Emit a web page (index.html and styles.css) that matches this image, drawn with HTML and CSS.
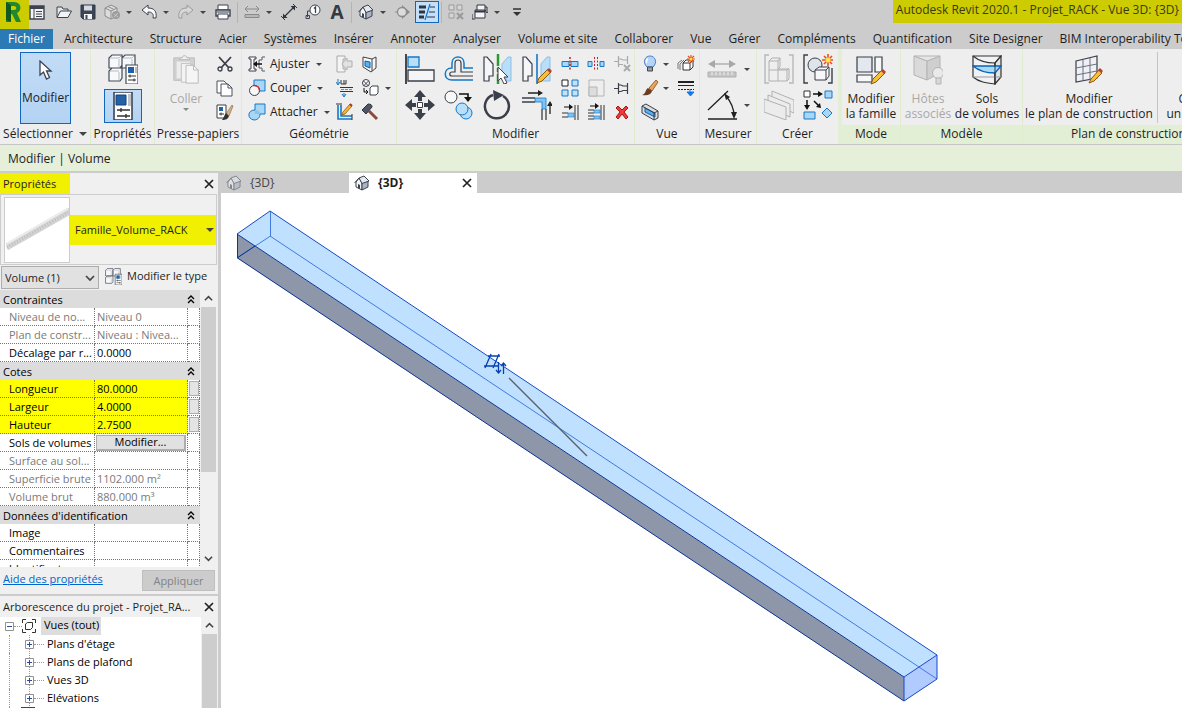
FILE: index.html
```html
<!DOCTYPE html>
<html lang="fr">
<head>
  <meta charset="utf-8">
  <meta name="viewport" content="width=device-width, initial-scale=1">
  <title>Autodesk Revit 2020.1 - Projet_RACK - Vue 3D: {3D}</title>
  <link rel="stylesheet" href="styles.css">
</head>
<body>

  <!-- Icons -->
  <svg class="sprite" aria-hidden="true">
    <symbol id="i-window" viewBox="0 0 16 16"><path d="M1 2h14v13H1z" fill="#f4f4f4" stroke="#3c4350" stroke-width="1.4"/><path d="M1 2h14v3H1z" fill="#3c4350"/><path d="M5 5v10" stroke="#3c4350"/><path d="M7 7.5h6M7 10h6M7 12.5h6" stroke="#3c4350"/></symbol>
    <symbol id="i-open" viewBox="0 0 16 16"><path d="M1 13V3h5l1 2h5v2" fill="#e4e6ea" stroke="#3c4350"/><path d="M1 13.5L4.5 7h11L12 13.5z" fill="#f2f3f5" stroke="#3c4350"/></symbol>
    <symbol id="i-save" viewBox="0 0 16 16"><path d="M1 1h14v14H3l-2-2z" fill="#3c4658" stroke="#2f3846"/><path d="M4 1.5h8v5H4z" fill="#d8dbe0"/><path d="M4 10h8v5H4z" fill="#f5f5f5"/><path d="M5.5 11h2v4h-2z" fill="#3c4658"/></symbol>
    <symbol id="i-sync" viewBox="0 0 16 16"><path d="M1 4l6-3 6 3v8l-6 3-6-3z" fill="#dcdcdc" stroke="#8c8c8c"/><path d="M1 4l6 3 6-3M7 7v8M4 2.500l6 3" fill="none" stroke="#8c8c8c"/><circle cx="12" cy="11" r="4" fill="#9c9c9c"/><path d="M10 13l4-4M10 10l4 3" stroke="#c8c8c8"/></symbol>
    <symbol id="i-undo" viewBox="0 0 16 16"><path d="M1 6l6-5v3c6 0 9 3 8 10h-3c1-4-1-6-5-6v3z" fill="#f8f8f8" stroke="#3c4350" stroke-linejoin="round"/></symbol>
    <symbol id="i-redo" viewBox="0 0 16 16"><path d="M15 6L9 1v3C3 4 0 7 1 14h3C3 10 5 8 9 8v3z" fill="#d8d8d8" stroke="#9a9a9a" stroke-linejoin="round"/></symbol>
    <symbol id="i-print" viewBox="0 0 16 16"><path d="M3 1h10v5H3z" fill="#fff" stroke="#3c4350"/><path d="M1 6h14v6H1z" fill="#eceef0" stroke="#3c4350" stroke-width="1.400"/><path d="M3 10h10v5H3z" fill="#fff" stroke="#3c4350"/><path d="M2 8h12" stroke="#3c4350"/></symbol>
    <symbol id="i-measure" viewBox="0 0 16 16"><path d="M1 5h14M4 2L1 5l3 3M12 2l3 3-3 3" fill="none" stroke="#8a8a8a"/><path d="M1 10.5h14v3H1z" fill="#b8b8b8" stroke="#8a8a8a"/></symbol>
    <symbol id="i-dim" viewBox="0 0 16 16"><path d="M3 13L13 3" stroke="#2f3540" stroke-width="1.300"/><path d="M2 14V9.500l4.500 4.500zM14 2v4.500L9.500 2z" fill="#2f3540"/><path d="M0 12l4 4M12 0l4 4" stroke="#2f3540"/></symbol>
    <symbol id="i-tag" viewBox="0 0 16 16"><circle cx="10" cy="6" r="5" fill="#fff" stroke="#3c4350"/><path d="M9 4.5L10.500 3v6" fill="none" stroke="#3c4350" stroke-width="1.300"/><path d="M5 7H2.500v6M1 14.500h3.500v-3H1z" fill="none" stroke="#3c4350"/></symbol>
    <symbol id="i-house" viewBox="0 0 16 16"><path d="M2 7v5l6 3V8L5 3z" fill="#f4f5f7" stroke="#3c4350"/><path d="M8 8v7l6-3V6z" fill="#aab4c4" stroke="#3c4350"/><path d="M5 3l5-2 5 5-7 2.500zM5 3L.5 8" fill="#e6e9ee" stroke="#3c4350"/><path d="M4 9v4l2 1v-4z" fill="#3c4350"/></symbol>
    <symbol id="i-section" viewBox="0 0 16 16"><path d="M7 1l8 7-8 7z" fill="#8c8c8c"/><circle cx="7" cy="8" r="4.500" fill="#dcdcdc" stroke="#8c8c8c" stroke-width="1.300"/><path d="M0 8h3" stroke="#8c8c8c"/></symbol>
    <symbol id="i-thin" viewBox="0 0 16 16"><path d="M0 3h7M0 8h6M0 13h5" stroke="#2f3540" stroke-width="3"/><path d="M11 3h5M10 8h6M8 13h8" stroke="#2f3540"/><path d="M11 0L6 16" stroke="#0a70d0" stroke-width="1.200"/></symbol>
    <symbol id="i-closewin" viewBox="0 0 16 16"><path d="M1 1h5v5H1zM9 1h5v5H9zM1 9h5v5H1z" fill="#d6d6d6" stroke="#9a9a9a"/><path d="M9 9l6 6M15 9l-6 6" stroke="#9a9a9a" stroke-width="2"/></symbol>
    <symbol id="i-switch" viewBox="0 0 16 16"><path d="M5 1h8v6H5z" fill="#f5f5f5" stroke="#2f3540"/><path d="M3 6h10v8H3z" fill="#f5f5f5" stroke="#2f3540"/><path d="M3 7.500h10" stroke="#2f3540" stroke-width="2"/><path d="M13 3h2v4M13 6l2 3 2-3M0 10v5h3" fill="none" stroke="#2f3540"/></symbol>
    <symbol id="i-custom" viewBox="0 0 16 16"><path d="M4 5h8" stroke="#333" stroke-width="1.500"/><path d="M4 8h8l-4 4z" fill="#333"/></symbol>
    <symbol id="i-logo" viewBox="0 0 20 22"><path d="M3 1h8c8 0 8 9 3 11l4 9h-5l-4-8H8v8H3z" fill="#1f8a2d"/><path d="M3 1l5 3v17l-5-2z" fill="#0f5a1c"/><path d="M8 5h3c3 0 3 4 0 4H8z" fill="#cccc00"/></symbol>

    <symbol id="i-cursor" viewBox="0 0 14 20"><path d="M1 1v14l3.500-3 3 7 3-1.500-3-6.500H12z" fill="#fff" stroke="#3c4350" stroke-width="1.300"/></symbol>
    <symbol id="i-types" viewBox="0 0 30 30"><g fill="#f8f9fa" stroke="#444b57" stroke-width="1.200"><path d="M1 4l3-3h10v10l-2 3H1zM14 4l3-3h10v10l-2 3H14zM1 17l3-3h10v10l-2 3H1z"/></g><path d="M2 4h9l2-2M15 4h9l2-2M11 5v8M24 5v8M2 17h9M11 18v8" fill="none" stroke="#b4bac4"/><path d="M18 11h12v19H18z" fill="#fff" stroke="#444b57" stroke-width="1.200"/><path d="M20 13h6v6h-6z" fill="#1d5fa8"/><path d="M27 13h2v6h-2z" fill="#bbb"/><path d="M20 22h8M20 26h8M22 20.500v3M26 24.500v3" stroke="#333"/></symbol>
    <symbol id="i-props" viewBox="0 0 20 28"><path d="M1 0h18v28H1z" fill="#fff" stroke="#333b48" stroke-width="1.500"/><path d="M3 3h10v10H3z" fill="#2461a6" stroke="#17407a"/><path d="M15 2h3v12h-3z" fill="#c0c4ca"/><path d="M4 18h13M4 24h13M8 16v4M13 22v4" stroke="#333" stroke-width="1.400"/></symbol>
    <symbol id="i-paste" viewBox="0 0 28 32"><path d="M1 3h22v24H1z" fill="#d0d0d0" stroke="#bcbcbc"/><path d="M7 5c0-2 2-2 3-2 0-3 5-3 5 0 1 0 3 0 3 2z" fill="#f0f0f0" stroke="#b4b4b4"/><path d="M4 7h14v18H4z" fill="#ececec"/><path d="M9 9h9l4 4v16H9z" fill="#f3f3f3" stroke="#c0c0c0"/><path d="M14 11h8l5 5v14H14z" fill="#f5f5f5" stroke="#b8b8b8"/><path d="M22 11v5h5" fill="none" stroke="#b8b8b8"/></symbol>
    <symbol id="i-cut" viewBox="0 0 18 18"><path d="M3 2l10 11M15 2L5 13" stroke="#3a3f49" stroke-width="1.800"/><circle cx="4" cy="14" r="2" fill="#eee" stroke="#3a3f49" stroke-width="1.300"/><circle cx="14" cy="14" r="2" fill="#eee" stroke="#3a3f49" stroke-width="1.300"/></symbol>
    <symbol id="i-copyclip" viewBox="0 0 18 18"><path d="M1 2h7l3 3v9H1z" fill="#fff" stroke="#4a505c"/><path d="M5 5h7l4 4v8H5z" fill="#fff" stroke="#4a505c"/><path d="M12 5v4h4" fill="none" stroke="#4a505c"/></symbol>
    <symbol id="i-matchprop" viewBox="0 0 18 18"><path d="M1 2h9v13H1z" fill="#fff" stroke="#3a3f49"/><path d="M3 4h4v4H3z" fill="#2461a6"/><path d="M3 11h5M5 9.500v3" stroke="#333"/><path d="M10 11l6-9 1 1-4 10z" fill="#d9b384" stroke="#7c6240" stroke-width=".6"/><path d="M10 10l3 3c-1 3-3 4-7 4 2-2 2-5 4-7z" fill="#333"/></symbol>

    <symbol id="i-cope" viewBox="0 0 18 18"><path d="M1 2h7v2H6v10h2v2H1v-2h2V4H1z" fill="#fff" stroke="#3a3f49"/><path d="M17 2h-3v3h-3v8h3v3h3" fill="#eee" stroke="#555b66"/><path d="M14 9H7" stroke="#111" stroke-width="1.500"/><path d="M5 9l4-3v6z" fill="#111"/></symbol>
    <symbol id="i-cutgeo" viewBox="0 0 18 18"><path d="M6 1h11v11H6z" fill="#a9d6f5" stroke="#1478c8"/><circle cx="6.500" cy="11.500" r="5" fill="#f8f8f8" stroke="#3a3f49"/><path d="M6 6.500c3 0 5.500 2 5.500 5" fill="none" stroke="#d22" stroke-width="1.600"/></symbol>
    <symbol id="i-join" viewBox="0 0 18 18"><path d="M7 1h10v10h-5c0 4-3 6-6 6-7-1-7-10 1-10z" fill="#a9d6f5" stroke="#1478c8"/><path d="M7 7c3 0 5 2 5 4H7z" fill="#86c3ee"/></symbol>
    <symbol id="i-wallend" viewBox="0 0 18 18"><path d="M1 1h8v3H7v10h2v3H1z" fill="#f4f4f4" stroke="#aaa"/><path d="M16 6v6h-5v3L6 9l5-6v3z" fill="#e2e2e2" stroke="#b0b0b0"/></symbol>
    <symbol id="i-split" viewBox="0 0 18 18"><path d="M2 2l9 2 4-2v11l-5 4-8-5z" fill="#f8f8f8" stroke="#3a3f49"/><path d="M11 4v12" stroke="#3a3f49"/><path d="M4 6l5 1v6l-5-2z" fill="#58b2f2" stroke="#0b5fae"/></symbol>
    <symbol id="i-beam" viewBox="0 0 18 18"><path d="M2 0v5M0 3l2 3 2-3" fill="none" stroke="#1478c8"/><path d="M5 1v4h3V1M8 5h2V1" fill="none" stroke="#333"/><path d="M4 8.500h13M4 12.500h13" stroke="#333"/><path d="M5 10.500h11" stroke="#888" stroke-dasharray="3 1"/><path d="M8 14v3M6 15l2 3 2-3" fill="none" stroke="#1478c8"/></symbol>
    <symbol id="i-unpaint" viewBox="0 0 18 18"><circle cx="5" cy="4" r="3.500" fill="#fff" stroke="#3a3f49"/><path d="M2.500 2l5 5M7.500 2l-5 5" stroke="#3a3f49"/><path d="M9 9l2-2h6v7l-2 2H9z" fill="#fff" stroke="#3a3f49"/><path d="M3 9v4h4M5 11l2 2-2 2" fill="none" stroke="#111"/></symbol>
    <symbol id="i-wallpencil" viewBox="0 0 18 18"><path d="M2 2v14h14M5 2v11h11" fill="none" stroke="#1478c8" stroke-width="1.600"/><path d="M0 1h6M16 11v6" stroke="#333"/><path d="M6 12l1-3 7-8 2 2-7 8z" fill="#f7b52c" stroke="#8a5a1a" stroke-width=".8"/><path d="M14 1l2 2" stroke="#a33" stroke-width="2"/></symbol>
    <symbol id="i-hammer" viewBox="0 0 18 18"><path d="M8 8l8 8" stroke="#8a4b3c" stroke-width="3"/><path d="M1 7l6-6c3 0 4 1 4 3L5 11z" fill="#4f5663" stroke="#2f3540"/></symbol>

    <symbol id="i-align" viewBox="0 0 30 30"><path d="M1 0v30" stroke="#111" stroke-width="1.500"/><path d="M3 3h11v10H3z" fill="#b9def8" stroke="#1478c8" stroke-width="1.300"/><path d="M3 16h26v11H3z" fill="#f5f5f7" stroke="#3a3f49" stroke-width="1.300"/></symbol>
    <symbol id="i-offset" viewBox="0 0 30 30"><path d="M29 14H20V9c0-8-12-8-12 0v5c-9 0-9 12 0 12h21" fill="none" stroke="#1478c8" stroke-width="1.500"/><path d="M29 18H17V9c0-4-6-4-6 0v9H8c-3 0-3 4 0 4h21" fill="none" stroke="#3a3f49" stroke-width="1.200"/></symbol>
    <symbol id="i-mirrorpick" viewBox="0 0 30 30"><path d="M1 3h3l6 7v12H6v5H1z" fill="#f6f6f8" stroke="#3a3f49" stroke-width="1.200"/><path d="M28 3h-3l-6 7v12h4v5h5z" fill="#b9def8" stroke="#8cbfe6"/><path d="M15 0v30" stroke="#2c9a32" stroke-width="2.500" stroke-dasharray="12 2 4 2"/><path d="M15 13v14l3-3 3 6 3-1-3-6h4z" fill="#fff" stroke="#3a3f49"/></symbol>
    <symbol id="i-mirrordraw" viewBox="0 0 30 30"><path d="M1 3h3l6 7v12H6v5H1z" fill="#f6f6f8" stroke="#3a3f49" stroke-width="1.200"/><path d="M28 3h-3l-6 7v17h9z" fill="#b9def8" stroke="#8cbfe6"/><path d="M15 0v30" stroke="#1478c8" stroke-width="1.600"/><path d="M15 29l2-5 9-9 3 3-9 9z" fill="#f9c032" stroke="#875818"/><path d="M25 16l2-2 3 3-2 2z" fill="#b54038"/></symbol>
    <symbol id="i-move" viewBox="0 0 30 30"><path d="M15 0l6 7h-4v4h-4V7H9zM15 30l6-7h-4v-4h-4v4H9zM0 15l7-6v4h4v4H7v4zM30 15l-7-6v4h-4v4h4v4z" fill="#3a3f49"/><path d="M12.500 12.500h5v5h-5z" fill="#fff" stroke="#3a3f49"/></symbol>
    <symbol id="i-copy" viewBox="0 0 30 30"><circle cx="7" cy="7" r="6" fill="#f8f8f8" stroke="#3a3f49"/><path d="M15 4h9v4" fill="none" stroke="#111" stroke-width="1.600"/><path d="M20 7h8l-4 5z" fill="#111"/><circle cx="22" cy="23" r="6" fill="#b9def8" stroke="#1478c8"/><circle cx="18" cy="19" r="6" fill="#b9def8" stroke="#1478c8"/></symbol>
    <symbol id="i-rotate" viewBox="0 0 30 30"><path d="M20 6a12 12 0 1 1-10-1" fill="none" stroke="#3a3f49" stroke-width="2.500"/><path d="M10 0l11 5-10 6z" fill="#3a3f49"/></symbol>
    <symbol id="i-trim" viewBox="0 0 30 30"><path d="M0 8h13M0 12h13M20 19v11M24 19v11" stroke="#3a3f49" stroke-width="1.300"/><path d="M13 8h11v11h-4v-7h-7z" fill="#7fc2f4" stroke="#1478c8" stroke-width=".8"/><path d="M6 3h12M28 24V14" stroke="#222" stroke-width="1.300"/><path d="M21 3l-5-3v6zM28 11l-3 5h6z" fill="#222"/></symbol>
    <symbol id="i-splitel" viewBox="0 0 18 18"><path d="M1 6.500h7v5H1zM10 6.500h7v5h-7z" fill="#a9d6f5" stroke="#1478c8"/><path d="M9 2v14" stroke="#b22" stroke-dasharray="2 1.500" stroke-width="1.500"/></symbol>
    <symbol id="i-splitgap" viewBox="0 0 18 18"><path d="M1 6.500h4v5H1zM13 6.500h4v5h-4z" fill="#a9d6f5" stroke="#1478c8"/><path d="M7.500 2v14M10.500 2v14" stroke="#b22" stroke-dasharray="2 1.500"/></symbol>
    <symbol id="i-unpin" viewBox="0 0 18 18"><path d="M1 6.500h4M5.500 1v11M6 4h2l2 1h4M6 9.500h4M14.500 1v8" fill="none" stroke="#aaa" stroke-width="1.200"/><path d="M11 10l6 6M17 10l-6 6" stroke="#aaa" stroke-width="2"/></symbol>
    <symbol id="i-array" viewBox="0 0 18 18"><path d="M1 1h6v6H1z" fill="#fff" stroke="#222"/><path d="M11 1h6v6h-6zM1 11h6v6H1zM11 11h6v6h-6z" fill="#c2e2fa" stroke="#1478c8"/></symbol>
    <symbol id="i-scale" viewBox="0 0 18 18"><path d="M2 1h15v16H2z" fill="#eee" stroke="#b4b4b4"/><path d="M2 8h8v9H2z" fill="#ddd" stroke="#b4b4b4"/></symbol>
    <symbol id="i-pin" viewBox="0 0 18 18"><path d="M1 9.500h4" stroke="#3a3f49"/><path d="M5.500 4v11M14.500 4v11M6 6h2l2 1h4M6 12.500h2l2-1h4" fill="none" stroke="#3a3f49" stroke-width="1.200"/></symbol>
    <symbol id="i-trimone" viewBox="0 0 18 18"><path d="M1 10h6M1 14h6M14 2v15M17 2v15" stroke="#333"/><path d="M7 10h6v4H7z" fill="#7fc2f4" stroke="#1478c8" stroke-width=".6"/><path d="M3 4h6" stroke="#111"/><path d="M12 4L8 1v6z" fill="#111"/></symbol>
    <symbol id="i-trimmulti" viewBox="0 0 18 18"><path d="M1 7h6M1 10h6M1 13h6M1 16h6M14 2v15M17 2v15" stroke="#333"/><path d="M7 7h6v3H7zM7 13h6v3H7z" fill="#7fc2f4" stroke="#1478c8" stroke-width=".6"/><path d="M3 3h6" stroke="#111"/><path d="M12 3L8 0v6z" fill="#111"/></symbol>
    <symbol id="i-delete" viewBox="0 0 18 18"><path d="M3 5l2-2 4 4 4-4 2 2-4 4 4 5-2 2-4-5-4 5-2-2 4-5z" fill="#ee3a3a" stroke="#a51616"/></symbol>

    <symbol id="i-bulb" viewBox="0 0 18 18"><path d="M6 12C1 7 4 1 9 1s8 6 3 11z" fill="#b5d4fa" stroke="#4e7fc4"/><path d="M7 4c-2 1-2 3-1 4" fill="none" stroke="#fff" stroke-width="1.500"/><path d="M6.500 12h5v4h-5z" fill="#9aa0aa" stroke="#444"/></symbol>
    <symbol id="i-displace" viewBox="0 0 18 18"><path d="M6 8l3-3h7v7l-3 3H6z" fill="#fff" stroke="#333"/><path d="M6 8h7v7M13 8l3-3" fill="none" stroke="#333"/><path d="M1 14V8l4-3M3 15V9l4-4" fill="none" stroke="#777"/><path d="M14 0v8M10 4h8M11 1l6 6M17 1l-6 6" stroke="#e3501c" stroke-width="1.200"/><circle cx="14" cy="4" r="1.500" fill="#ffe14a"/></symbol>
    <symbol id="i-paint" viewBox="0 0 18 18"><path d="M8 9l7-8 2 2-6 9z" fill="#e9a35b" stroke="#7d4a20" stroke-width=".8"/><path d="M7 9l4 3c-1 4-5 5-10 4 4-1 3-5 6-7z" fill="#6c3c22"/></symbol>
    <symbol id="i-linework" viewBox="0 0 18 18"><path d="M1 3h16" stroke="#222" stroke-width="2"/><path d="M1 6.500h16" stroke="#222"/><path d="M1 10.500h16" stroke="#222" stroke-dasharray="2 1"/><path d="M13 10v3M10 13h7l-3.500 4z" fill="#1478e8" stroke="#1478e8"/></symbol>
    <symbol id="i-box3d" viewBox="0 0 18 18"><path d="M1 3l4-2 12 7v7l-4 2-12-7z" fill="#ddd" stroke="#3a3f49"/><path d="M4 5l10 5v4L4 9z" fill="#58b2f2" stroke="#0b5fae"/><path d="M1 3l12 7v7M13 10l4-2" fill="none" stroke="#3a3f49"/></symbol>

    <symbol id="i-bigmeasure" viewBox="0 0 30 30"><path d="M4 10h22" fill="none" stroke="#a8a8a8" stroke-width="1.300"/><path d="M1 10l7-4v8zM29 10l-7-4v8z" fill="#a8a8a8"/><path d="M1 18h28v5H1z" fill="#c6c6c6" stroke="#b0b0b0"/><path d="M5 18v3M9 18v3M13 18v3M17 18v3M21 18v3M25 18v3" stroke="#eee"/></symbol>
    <symbol id="i-angle" viewBox="0 0 30 30"><path d="M1 20L21 1M1 29h29" stroke="#222" stroke-width="1.300"/><path d="M19 6c6 7 8 13 8 20" fill="none" stroke="#222" stroke-width="1.300"/><path d="M17 3l6 4-4 3zM24 22h6l-3 7z" fill="#222"/></symbol>

    <symbol id="i-group" viewBox="0 0 30 30"><path d="M5 1H1v28h4M25 1h4v28h-4" fill="none" stroke="#b8b8b8" stroke-width="1.400"/><path d="M5 7l3-3h8v9l-2 2h11v10l-2 2H5z" fill="#eee" stroke="#b0b0b0"/><path d="M5 16h18v11M14 7v20M5 7h9l2-3M23 16l2-2" fill="none" stroke="#b0b0b0"/></symbol>
    <symbol id="i-assembly" viewBox="0 0 30 30"><path d="M5 1H1v28h4M25 29h4V14" fill="none" stroke="#3a3f49" stroke-width="1.400"/><circle cx="12" cy="11" r="7" fill="#dfe3ea" stroke="#3a3f49"/><path d="M12 16l4-3h10v9l-3 4H12z" fill="#f8f8fa" stroke="#3a3f49"/><path d="M12 16h11v10M23 16l3-3" fill="none" stroke="#3a3f49"/><path d="M25 0v12M19 6h12M21 2l8 8M29 2l-8 8" stroke="#e3501c" stroke-width="1.600"/><circle cx="25" cy="6" r="2.500" fill="#ffe14a"/></symbol>
    <symbol id="i-parts" viewBox="0 0 30 30"><g fill="#ececec" stroke="#b0b0b0"><path d="M8 1l22 9v13L8 14z"/><path d="M4 5l22 9v13L4 18z"/><path d="M0 9l22 8v13L0 22z"/></g></symbol>
    <symbol id="i-similar" viewBox="0 0 30 30"><path d="M1 1h6v6H1z" fill="#fff" stroke="#333"/><path d="M22 1h7v7h-7zM1 22h11v7H1zM24 18l5 5-5 5-5-5z" fill="#a9d6f5" stroke="#1478c8"/><path d="M10 4h7M4 10v7M11 11l5 5" stroke="#111" stroke-width="1.500"/><path d="M20 4l-5-3v6zM4 20l-3-5h6zM18 18l-5-1 4-4z" fill="#111"/></symbol>

    <symbol id="i-editfam" viewBox="0 0 30 30"><g fill="#e3e7ee" stroke="#3a3f49" stroke-width="1.200"><path d="M1 2h15v15H1z"/><path d="M19 2h7v15h-7zM1 20h15v7H1z" fill="#f6f7f9"/></g><path d="M15 29l2-5 9-9 3 3-9 9z" fill="#f9c032" stroke="#875818"/><path d="M25 16l2-2 3 3-2 2z" fill="#b54038"/></symbol>
    <symbol id="i-hosts" viewBox="0 0 30 30"><path d="M1 1l13 5v19L1 20z" fill="#dadada" stroke="#b4b4b4"/><path d="M14 6l13-5v17l-13 7z" fill="#cfcfcf" stroke="#b4b4b4"/><path d="M1 1h26l-13 5z" fill="#e6e6e6" stroke="#b4b4b4"/><circle cx="25" cy="18" r="5.500" fill="#e9e9e9" stroke="#b4b4b4"/><path d="M23 23h5v6h-5z" fill="#d8d8d8" stroke="#b4b4b4"/></symbol>
    <symbol id="i-floors" viewBox="0 0 30 30"><path d="M1 1h28l-6 7v21C14 28 7 27 1 22z" fill="#f1f2f4" stroke="#333" stroke-width="1.200"/><path d="M1 1c6 5 13 7 22 7" fill="none" stroke="#333" stroke-width="1.200"/><path d="M29 1v21l-6 7V8z" fill="#e2e3e6" stroke="#333" stroke-width="1.200"/><path d="M1 11h28l-6 7C14 18 7 16 1 11z" fill="#a6dbf5" stroke="#0a62b8" stroke-width="1.300"/><path d="M1 22h28" stroke="#999"/><path d="M23 8v21" stroke="#333"/></symbol>
    <symbol id="i-grid" viewBox="0 0 30 30"><path d="M2 6l21-5v22L2 27z" fill="#f0f1f5" stroke="#3a3f49" stroke-width="1.200"/><path d="M2 13l21-4M2 20l21-4M9 5v21M16 3v22" stroke="#6a7180"/><path d="M15 28l2-4 8-9 3 3-8 8z" fill="#f9c032" stroke="#875818"/><path d="M24 15l2-2 3 3-2 2z" fill="#b54038"/></symbol>
    <symbol id="i-x" viewBox="0 0 10 10"><path d="M1 1l8 8M9 1L1 9" stroke="#222" stroke-width="1.700"/></symbol>
    <symbol id="i-chev" viewBox="0 0 10 10"><path d="M1 7l4-4 4 4" fill="none" stroke="#444" stroke-width="1.700"/></symbol>
    <symbol id="i-chevdown" viewBox="0 0 10 10"><path d="M1 3l4 4 4-4" fill="none" stroke="#444" stroke-width="1.700"/></symbol>
    <symbol id="i-fold" viewBox="0 0 8 10"><path d="M1 5l3-3 3 3M1 9l3-3 3 3" fill="none" stroke="#000" stroke-width="1.300"/></symbol>
    <symbol id="i-views" viewBox="0 0 14 14"><path d="M4 .5H.5V4M10 .5h3.500V4M4 13.500H.5V10M10 13.500h3.500V10" fill="none" stroke="#333"/><path d="M3.500 5l2-1.500h5v5l-2 2h-5z" fill="#fff" stroke="#333"/></symbol>
    <symbol id="i-plus" viewBox="0 0 9 9"><path d="M.5.5h8v8h-8z" fill="#fff" stroke="#919191"/><path d="M2 4.500h5M4.500 2v5" stroke="#2a4a9a"/></symbol>
    <symbol id="i-minus" viewBox="0 0 9 9"><path d="M.5.5h8v8h-8z" fill="#fff" stroke="#919191"/><path d="M2 4.500h5" stroke="#2a4a9a"/></symbol>
  </svg>

  <div class="app">
    <header class="topbar">
      <div class="quickbar">
        <button class="logo" aria-label="Revit"><svg><use href="#i-logo"/></svg></button>
        <button class="first" aria-label="Accueil"><svg><use href="#i-window"/></svg></button>
        <button aria-label="Ouvrir"><svg><use href="#i-open"/></svg></button>
        <button aria-label="Enregistrer"><svg><use href="#i-save"/></svg></button>
        <button aria-label="Synchroniser"><svg><use href="#i-sync"/></svg></button>
        <button class="drop" aria-label="Options"></button>
        <button aria-label="Annuler"><svg><use href="#i-undo"/></svg></button>
        <button class="drop" aria-label="Options"></button>
        <button aria-label="Rétablir"><svg><use href="#i-redo"/></svg></button>
        <button class="drop" aria-label="Options"></button>
        <button aria-label="Imprimer"><svg><use href="#i-print"/></svg></button>
        <span class="sep"></span>
        <button aria-label="Mesurer"><svg><use href="#i-measure"/></svg></button>
        <button class="drop" aria-label="Options"></button>
        <button aria-label="Cote alignée"><svg><use href="#i-dim"/></svg></button>
        <button aria-label="Étiquette"><svg><use href="#i-tag"/></svg></button>
        <button class="letter" aria-label="Texte">A</button>
        <span class="sep"></span>
        <button aria-label="Vue 3D par défaut"><svg><use href="#i-house"/></svg></button>
        <button class="drop" aria-label="Options"></button>
        <button aria-label="Coupe"><svg><use href="#i-section"/></svg></button>
        <button class="on" aria-label="Lignes fines"><svg><use href="#i-thin"/></svg></button>
        <span class="sep"></span>
        <button aria-label="Fermer les vues"><svg><use href="#i-closewin"/></svg></button>
        <button aria-label="Changer de fenêtre"><svg><use href="#i-switch"/></svg></button>
        <button class="drop" aria-label="Options"></button>
        <button aria-label="Personnaliser"><svg><use href="#i-custom"/></svg></button>
      </div>
      <h1 class="app-title">Autodesk Revit 2020.1 - Projet_RACK - Vue 3D: {3D}</h1>
    </header>

    <nav class="tabs">
      <a class="file" href="#">Fichier</a>
      <a href="#">Architecture</a>
      <a href="#">Structure</a>
      <a href="#">Acier</a>
      <a href="#">Systèmes</a>
      <a href="#">Insérer</a>
      <a href="#">Annoter</a>
      <a href="#">Analyser</a>
      <a href="#">Volume et site</a>
      <a href="#">Collaborer</a>
      <a href="#">Vue</a>
      <a href="#">Gérer</a>
      <a href="#">Compléments</a>
      <a href="#">Quantification</a>
      <a href="#">Site Designer</a>
      <a href="#">BIM Interoperability Tools</a>
    </nav>

    <!-- Ribbon -->
    <div class="ribbon">
      <section class="panel p-select">
        <div class="panel-body">
          <button class="tool big active"><svg class="cursor"><use href="#i-cursor"/></svg><span>Modifier</span></button>
        </div>
        <h2>Sélectionner <i class="tri"></i></h2>
      </section>
      <section class="panel p-props">
        <div class="panel-body stack">
          <button class="tool" aria-label="Propriétés du type"><svg class="l"><use href="#i-types"/></svg></button>
          <button class="tool wide active" aria-label="Propriétés"><svg class="props"><use href="#i-props"/></svg></button>
        </div>
        <h2>Propriétés</h2>
      </section>
      <section class="panel p-clip">
        <div class="panel-body">
          <button class="tool big" disabled><svg class="l"><use href="#i-paste"/></svg><span>Coller</span><i class="tri"></i></button>
          <div class="small-grid">
            <button class="tool" aria-label="Couper"><svg><use href="#i-cut"/></svg></button>
            <button class="tool" aria-label="Copier"><svg><use href="#i-copyclip"/></svg></button>
            <button class="tool" aria-label="Copier le type"><svg><use href="#i-matchprop"/></svg></button>
          </div>
        </div>
        <h2>Presse-papiers</h2>
      </section>
      <section class="panel p-geo">
        <div class="panel-body">
          <div class="small-grid">
            <button class="tool"><svg><use href="#i-cope"/></svg>Ajuster<i class="tri"></i></button>
            <button class="tool"><svg><use href="#i-cutgeo"/></svg>Couper<i class="tri"></i></button>
            <button class="tool"><svg><use href="#i-join"/></svg>Attacher<i class="tri"></i></button>
          </div>
          <div class="small-grid two">
            <button class="tool" aria-label="Extrémité"><svg><use href="#i-wallend"/></svg></button>
            <button class="tool" aria-label="Scinder la face"><svg><use href="#i-split"/></svg></button>
            <button class="tool" aria-label="Poutres"><svg><use href="#i-beam"/></svg></button>
            <button class="tool" aria-label="Peindre"><svg><use href="#i-unpaint"/></svg><i class="tri"></i></button>
            <button class="tool" aria-label="Jonctions de murs"><svg><use href="#i-wallpencil"/></svg></button>
            <button class="tool" aria-label="Démolir"><svg><use href="#i-hammer"/></svg></button>
          </div>
        </div>
        <h2>Géométrie</h2>
      </section>
      <section class="panel p-modify">
        <div class="panel-body">
          <div class="large-grid">
            <button class="tool" aria-label="Aligner"><svg class="l"><use href="#i-align"/></svg></button>
            <button class="tool" aria-label="Décaler"><svg class="l"><use href="#i-offset"/></svg></button>
            <button class="tool" aria-label="Symétrie - Choisir l'axe"><svg class="l"><use href="#i-mirrorpick"/></svg></button>
            <button class="tool" aria-label="Symétrie - Dessiner l'axe"><svg class="l"><use href="#i-mirrordraw"/></svg></button>
            <button class="tool" aria-label="Déplacer"><svg class="l"><use href="#i-move"/></svg></button>
            <button class="tool" aria-label="Copier"><svg class="l"><use href="#i-copy"/></svg></button>
            <button class="tool" aria-label="Rotation"><svg class="l"><use href="#i-rotate"/></svg></button>
            <button class="tool" aria-label="Ajuster en angle"><svg class="l"><use href="#i-trim"/></svg></button>
          </div>
          <div class="small-grid three">
            <button class="tool" aria-label="Scinder l'élément"><svg><use href="#i-splitel"/></svg></button>
            <button class="tool" aria-label="Scinder avec espace"><svg><use href="#i-splitgap"/></svg></button>
            <button class="tool" aria-label="Déverrouiller"><svg><use href="#i-unpin"/></svg></button>
            <button class="tool" aria-label="Réseau"><svg><use href="#i-array"/></svg></button>
            <button class="tool" aria-label="Échelle"><svg><use href="#i-scale"/></svg></button>
            <button class="tool" aria-label="Verrouiller"><svg><use href="#i-pin"/></svg></button>
            <button class="tool" aria-label="Prolonger un élément"><svg><use href="#i-trimone"/></svg></button>
            <button class="tool" aria-label="Prolonger plusieurs éléments"><svg><use href="#i-trimmulti"/></svg></button>
            <button class="tool" aria-label="Supprimer"><svg><use href="#i-delete"/></svg></button>
          </div>
        </div>
        <h2>Modifier</h2>
      </section>
      <section class="panel p-view">
        <div class="panel-body">
          <div class="small-grid two">
            <button class="tool" aria-label="Masquer"><svg><use href="#i-bulb"/></svg><i class="tri"></i></button>
            <button class="tool" aria-label="Déplacer les éléments"><svg><use href="#i-displace"/></svg></button>
            <button class="tool" aria-label="Remplacer les graphismes"><svg><use href="#i-paint"/></svg><i class="tri"></i></button>
            <button class="tool" aria-label="Lignes"><svg><use href="#i-linework"/></svg></button>
            <button class="tool" aria-label="Zone de sélection"><svg><use href="#i-box3d"/></svg></button>
          </div>
        </div>
        <h2>Vue</h2>
      </section>
      <section class="panel p-measure">
        <div class="panel-body">
          <div class="large-grid one">
            <button class="tool" aria-label="Mesurer entre deux références"><svg class="l"><use href="#i-bigmeasure"/></svg><i class="tri"></i></button>
            <button class="tool" aria-label="Cote angulaire"><svg class="l"><use href="#i-angle"/></svg><i class="tri"></i></button>
          </div>
        </div>
        <h2>Mesurer</h2>
      </section>
      <section class="panel p-create">
        <div class="panel-body">
          <div class="large-grid pair">
            <button class="tool" aria-label="Créer un groupe"><svg class="l"><use href="#i-group"/></svg></button>
            <button class="tool" aria-label="Créer un assemblage"><svg class="l"><use href="#i-assembly"/></svg></button>
            <button class="tool" aria-label="Créer des pièces"><svg class="l"><use href="#i-parts"/></svg></button>
            <button class="tool" aria-label="Créer similaire"><svg class="l"><use href="#i-similar"/></svg></button>
          </div>
        </div>
        <h2>Créer</h2>
      </section>
      <section class="panel context p-mode">
        <div class="panel-body">
          <button class="tool big"><svg class="l"><use href="#i-editfam"/></svg><span>Modifier<br>la famille</span></button>
        </div>
        <h2>Mode</h2>
      </section>
      <section class="panel context p-model">
        <div class="panel-body">
          <button class="tool big" disabled><svg class="l"><use href="#i-hosts"/></svg><span>Hôtes<br>associés</span></button>
          <button class="tool big"><svg class="l"><use href="#i-floors"/></svg><span>Sols<br>de volumes</span></button>
        </div>
        <h2>Modèle</h2>
      </section>
      <section class="panel context p-plan">
        <div class="panel-body">
          <button class="tool big"><svg class="l"><use href="#i-grid"/></svg><span>Modifier<br>le plan de construction</span></button>
          <span class="vline"></span>
          <button class="tool big"><span class="blank"></span><span>Créer<br>un niveau</span></button>
        </div>
        <h2>Plan de construction</h2>
      </section>
    </div>

    <div class="options">Modifier | Volume</div>

    <main class="work">
      <aside class="side">
        <section class="properties">
          <header class="dock-title">
            <h2 class="marked">Propriétés</h2>
            <button aria-label="Fermer"><svg><use href="#i-x"/></svg></button>
          </header>
          <div class="type-box">
            <svg class="thumb" viewBox="0 0 66 66"><path d="M1 47L63 11l3-1v8L3 54z" fill="#d4d4d4"/><path d="M2 47L65 11" stroke="#ececec" stroke-width="2"/><path d="M2 51L65 15" stroke="#bcbcbc" stroke-width="3" stroke-dasharray="1 2"/></svg>
            <button class="family"><span>Famille_Volume_RACK</span><i class="tri"></i></button>
          </div>
          <div class="filter">
            <div class="picker">
              <select aria-label="Filtre"><option>Volume (1)</option></select>
              <svg><use href="#i-chevdown"/></svg>
            </div>
            <button><svg><use href="#i-types"/></svg>Modifier le type</button>
          </div>
          <div class="scroller">
            <table>
              <colgroup><col class="c-name"><col><col class="c-link"></colgroup>
              <tbody>
                <tr class="group"><th colspan="3">Contraintes<svg><use href="#i-fold"/></svg></th></tr>
                <tr class="ro"><td>Niveau de no...</td><td>Niveau 0</td><td></td></tr>
                <tr class="ro"><td>Plan de constr...</td><td>Niveau : Nivea...</td><td></td></tr>
                <tr><td>Décalage par r...</td><td>0.0000</td><td></td></tr>
                <tr class="group"><th colspan="3">Cotes<svg><use href="#i-fold"/></svg></th></tr>
                <tr class="hot"><td>Longueur</td><td>80.0000</td><td><button aria-label="Associer Longueur"></button></td></tr>
                <tr class="hot"><td>Largeur</td><td>4.0000</td><td><button aria-label="Associer Largeur"></button></td></tr>
                <tr class="hot"><td>Hauteur</td><td>2.7500</td><td><button aria-label="Associer Hauteur"></button></td></tr>
                <tr><td>Sols de volumes</td><td class="cell-btn"><button>Modifier...</button></td><td></td></tr>
                <tr class="ro"><td>Surface au sol...</td><td></td><td></td></tr>
                <tr class="ro"><td>Superficie brute</td><td>1102.000 m²</td><td></td></tr>
                <tr class="ro"><td>Volume brut</td><td>880.000 m³</td><td></td></tr>
                <tr class="group"><th colspan="3">Données d'identification<svg><use href="#i-fold"/></svg></th></tr>
                <tr><td>Image</td><td></td><td></td></tr>
                <tr><td>Commentaires</td><td></td><td></td></tr>
                <tr><td>Identifiant</td><td></td><td></td></tr>
              </tbody>
            </table>
            <div class="scrollbar">
              <button aria-label="Haut"><svg><use href="#i-chev"/></svg></button>
              <span class="handle"></span>
              <button aria-label="Bas"><svg><use href="#i-chevdown"/></svg></button>
            </div>
          </div>
          <footer class="apply">
            <a href="#">Aide des propriétés</a>
            <button disabled>Appliquer</button>
          </footer>
        </section>

        <section class="browser">
          <header class="dock-title">
            <h2>Arborescence du projet - Projet_RA...</h2>
            <button aria-label="Fermer"><svg><use href="#i-x"/></svg></button>
          </header>
          <div class="tree-wrap">
            <ul class="tree">
              <li class="root"><svg><use href="#i-minus"/></svg><i class="dots"></i><svg class="views"><use href="#i-views"/></svg><span class="picked">Vues (tout)</span></li>
              <li><svg><use href="#i-plus"/></svg><i class="dots"></i><span>Plans d'étage</span></li>
              <li><svg><use href="#i-plus"/></svg><i class="dots"></i><span>Plans de plafond</span></li>
              <li><svg><use href="#i-plus"/></svg><i class="dots"></i><span>Vues 3D</span></li>
              <li><svg><use href="#i-plus"/></svg><i class="dots"></i><span>Elévations</span></li>
              <li class="legend"><i class="sheet"></i></li>
            </ul>
            <div class="scrollbar">
              <button aria-label="Haut"><svg><use href="#i-chev"/></svg></button>
              <span class="handle"></span>
            </div>
          </div>
        </section>
      </aside>

      <section class="viewer">
        <div class="view-tabs">
          <button class="view-tab"><svg><use href="#i-house"/></svg>{3D}</button>
          <div class="view-tab current"><svg><use href="#i-house"/></svg>{3D}<button class="close" aria-label="Fermer"><svg><use href="#i-x"/></svg></button></div>
        </div>
        <svg class="scene" viewBox="221 193 961 515" preserveAspectRatio="xMinYMin slice">
          <path d="M237 234L904 677v24L237 258z" fill="#8e96aa"/>
          <path d="M270 211L937 655l-33 22L237 234z" fill="#bfe1ff"/>
          <path d="M904 677l33-22v24l-33 22z" fill="#b2cbff"/>
          <g fill="none" stroke="#3f7be0">
            <path d="M270.500 211v25L237 258M270 236l667 443"/>
          </g>
          <path d="M237 258l18-12" stroke="#0a2f8c"/>
          <g fill="none" stroke="#1848c8">
            <path d="M270 211L937 655M237 234l33-23M904 677l33-22v24l-33 22z"/>
            <path d="M237.500 234v24L904 701M237 234l667 443" stroke="#0d3596"/>
          </g>
          <path d="M509 378l78 78" stroke="#5a6270" stroke-width="1.500"/>
          <g fill="none" stroke="#0a3fae" stroke-width="1.300">
            <path d="M484 366h14M488 356h12M485 368l6-14M493 368l6-14"/>
            <path d="M498.500 362v11M496 370l2.500 3 2.500-3M503.500 374v-11M501 366l2.500-3 2.500 3"/>
          </g>
        </svg>
      </section>
    </main>
  </div>

</body>
</html>
```
FILE: styles.css
```css
* {
  box-sizing: border-box;
}
body {
  margin: 0;
  height: 100vh;
  overflow: hidden;
  background: #ffffff;
  color: #1e1e1e;
  font-family: "Open Sans", "Noto Sans", sans-serif;
  font-size: 12px;
  line-height: 16px;
}
h1, h2 {
  margin: 0;
  font-size: inherit;
  font-weight: normal;
}
button {
  display: flex;
  align-items: center;
  justify-content: center;
  margin: 0;
  padding: 0;
  border: 0;
  background: none;
  color: inherit;
  font: inherit;
  white-space: nowrap;
}
a {
  color: inherit;
  text-decoration: none;
}
svg {
  display: block;
  flex: none;
  overflow: visible;
}
.sprite {
  display: none;
}
.app {
  display: flex;
  flex-direction: column;
  height: 100vh;
}

/* title bar */
.topbar {
  display: flex;
  justify-content: space-between;
  height: 29px;
  background: #cccccc;
}
.quickbar {
  display: flex;
  gap: 8px;
  height: 24px;
}
.quickbar button {
  width: 16px;
}
.quickbar svg {
  width: 16px;
  height: 16px;
}
.quickbar .logo {
  align-items: flex-start;
  width: 29px;
  height: 29px;
  padding: 1px 4px 0 0;
  background: #cccc00;
}
.quickbar .logo svg {
  width: 20px;
  height: 22px;
}
.quickbar .first {
  width: 19px;
  margin-left: -8px;
  justify-content: flex-start;
}
.quickbar .drop {
  width: 8px;
  margin-left: -3px;
}
.drop::after, .tri {
  content: "";
  display: inline-block;
  border: 3px solid transparent;
  border-top-color: #444444;
  border-bottom: 0;
}
.quickbar .sep {
  width: 1px;
  height: 21px;
  margin: 2px -2px 0;
  background: #b4b4b4;
}
.quickbar .letter {
  color: #333a45;
  font-size: 19px;
  font-weight: bold;
}
.quickbar .on {
  width: 24px;
  height: 22px;
  margin: 1px -4px 0;
  border: 1px solid #1067c0;
  background: #c4dff8;
}
.app-title {
  height: 23px;
  padding: 2px 3px 0;
  background: #cccc00;
  color: #3a3a10;
  white-space: nowrap;
}

/* ribbon tabs */
.tabs {
  display: flex;
  height: 20px;
  overflow: hidden;
  background: #cccccc;
  white-space: nowrap;
}
.tabs a {
  padding: 2px 9px 0 8px;
}
.tabs .file {
  margin-right: 3px;
  padding: 2px 8px 0;
  background: #2a7ab5;
  color: #ffffff;
}

/* ribbon */
.ribbon {
  display: flex;
  height: 96px;
  overflow: hidden;
  border-bottom: 1px solid #c6c6c6;
  background: #eeeeee;
}
.panel {
  display: flex;
  flex: none;
  flex-direction: column;
  border-right: 1px solid #e1eccf;
}
.panel-body {
  display: flex;
  flex: 1;
  padding-top: 3px;
}
.panel h2 {
  height: 19px;
  line-height: 18px;
  text-align: center;
  white-space: nowrap;
}
.panel h2 .tri {
  margin: 0 0 2px 3px;
  border-width: 4px 4px 0;
}
.context h2 {
  background: #e3efd5;
}
.tool svg {
  width: 18px;
  height: 18px;
}
.tool svg.l {
  width: 30px;
  height: 30px;
}
.tool svg.props {
  width: 20px;
  height: 28px;
}
.tool svg.cursor {
  width: 14px;
  height: 20px;
  margin: 4px 0;
}
.tool.big {
  flex-direction: column;
  justify-content: flex-start;
  height: 72px;
  padding-top: 3px;
  line-height: 15px;
}
.tool.big span {
  margin-top: 6px;
}
.tool.big .blank {
  height: 30px;
  margin: 0;
}
.tool:disabled {
  color: #a8a8a8;
}
.tool:disabled .tri {
  margin-top: 2px;
  border-top-color: #888888;
}
.tool.active {
  border: 1px solid #1067c0;
  background: linear-gradient(#c2dcf6, #b4d3f3);
}
.small-grid {
  display: grid;
  grid-template-rows: repeat(3, 24px);
  align-content: start;
}
.small-grid .tool {
  justify-content: flex-start;
}
.large-grid {
  display: grid;
  grid-template-rows: repeat(2, 36px);
  grid-template-columns: repeat(4, 39px);
  align-content: start;
  margin-top: -1px;
}
.p-select {
  width: 91px;
}
.p-select .panel-body {
  padding-left: 20px;
}
.p-select .big {
  width: 51px;
}
.p-props {
  width: 64px;
}
.panel-body.stack {
  flex-direction: column;
  align-items: center;
  gap: 5px;
  padding-top: 5px;
}
.tool.wide {
  width: 38px;
  height: 34px;
}
.p-clip {
  width: 87px;
}
.p-clip .panel-body {
  gap: 13px;
  padding-left: 14px;
}
.p-clip .big {
  width: 34px;
}
.p-geo {
  width: 155px;
}
.p-geo .panel-body {
  padding-left: 6px;
}
.p-geo .small-grid {
  width: 88px;
}
.p-geo .tool {
  gap: 4px;
}
.p-geo .tool .tri {
  margin-left: 2px;
}
.p-geo .small-grid.two {
  width: 60px;
  grid-template-columns: 25px 35px;
}
.p-modify {
  width: 238px;
}
.p-modify .panel-body {
  gap: 5px;
  padding-left: 3px;
}
.p-modify .three {
  grid-template-columns: repeat(3, 26px);
}
.p-view {
  width: 65px;
}
.p-view .panel-body {
  padding-left: 6px;
}
.p-view .two {
  grid-template-columns: 36px 20px;
}
.p-view .tool .tri {
  margin-left: 4px;
}
.p-measure {
  width: 57px;
}
.p-measure .one {
  grid-template-columns: 57px;
}
.p-measure .tool {
  gap: 7px;
}
.p-create {
  width: 85px;
  border-right: 4px solid #e3efd5;
}
.p-create .pair {
  grid-template-columns: 39px 39px;
  margin-left: 2px;
}
.p-mode {
  width: 59px;
}
.p-mode .big {
  width: 58px;
}
.p-model {
  width: 122px;
}
.p-model .big:first-child {
  width: 54px;
}
.p-model .big {
  width: 64px;
}
.p-plan {
  width: 212px;
}
.p-plan .panel-body {
  padding-left: 2px;
}
.p-plan .big:first-child {
  width: 128px;
}
.vline {
  width: 1px;
  height: 71px;
  margin-left: 4px;
  background: #c4c4c4;
}
.p-plan .big:last-child {
  width: 72px;
}

.options {
  height: 28px;
  padding: 6px 8px;
  border-bottom: 2px solid #cccccc;
  background: #e5efd9;
}

/* docked palettes */
.work {
  display: flex;
  flex: 1;
  min-height: 0;
}
.side {
  display: flex;
  flex: none;
  flex-direction: column;
  width: 221px;
  border-right: 3px solid #cccccc;
  background: #f0f0f0;
  font-size: 11px;
}
.dock-title {
  display: flex;
  align-items: center;
  justify-content: space-between;
  height: 21px;
  padding-right: 4px;
  white-space: nowrap;
}
.dock-title h2 {
  padding-left: 3px;
  line-height: 21px;
}
.dock-title .marked {
  width: 70px;
  background: #f0f000;
}
.dock-title svg {
  width: 10px;
  height: 10px;
}
.type-box {
  display: flex;
  align-items: center;
  height: 71px;
  margin-right: 1px;
  padding-left: 3px;
  border: 1px solid #cccccc;
}
.thumb {
  width: 66px;
  height: 66px;
  border: 1px solid #cccccc;
  background: #ffffff;
}
.family {
  flex: 1;
  justify-content: space-between;
  height: 30px;
  padding: 0 2px 0 5px;
  background: #f0f000;
}
.family .tri {
  border-width: 4px 4px 0;
}
.filter {
  display: flex;
  gap: 6px;
  height: 25px;
  padding: 1px 0 1px 1px;
}
.picker {
  position: relative;
}
.picker select {
  width: 98px;
  height: 23px;
  padding: 0 3px;
  border: 1px solid #adadad;
  background: #e1e1e1;
  color: inherit;
  font: inherit;
  appearance: none;
}
.filter .picker svg {
  position: absolute;
  top: 7px;
  right: 4px;
  width: 10px;
  height: 10px;
  pointer-events: none;
}
.filter button {
  gap: 5px;
  height: 20px;
}
.filter svg {
  width: 17px;
  height: 17px;
}
.scroller {
  display: flex;
  height: 277px;
  overflow: hidden;
}
table {
  flex: none;
  width: 200px;
  height: 288px;
  border-spacing: 0;
  table-layout: fixed;
  background: #ffffff;
  color: #000000;
}
.c-name {
  width: 95px;
}
.c-link {
  width: 12px;
}
td, th {
  height: 18px;
  padding: 0 0 0 2px;
  border-right: 1px dotted #777777;
  border-bottom: 1px dotted #777777;
  font-weight: normal;
  line-height: 17px;
  text-align: left;
  white-space: nowrap;
  overflow: hidden;
}
td:first-child {
  padding-left: 9px;
}
td:last-child {
  padding: 0;
}
.group th {
  padding-left: 3px;
  border: 0;
  background: #dcdcdc;
}
.group svg {
  float: right;
  width: 8px;
  height: 10px;
  margin: 3px 5px 0 0;
}
.ro {
  color: #7a7a7a;
}
.hot td:not(:last-child) {
  background: #ffff00;
}
.hot button {
  width: 10px;
  height: 15px;
  margin-left: 1px;
  border: 1px solid #adadad;
  background: #e4e4e4;
}
td.cell-btn {
  padding: 0 1px;
}
.cell-btn button {
  width: 100%;
  height: 16px;
  border: 1px solid #adadad;
  border-width: 1px 2px 2px 1px;
  background: #e1e1e1;
  line-height: 14px;
}
.scrollbar {
  display: flex;
  flex: none;
  flex-direction: column;
  width: 17px;
  background: #f0f0f0;
}
.scrollbar button {
  flex: none;
  height: 17px;
}
.scrollbar svg {
  width: 9px;
  height: 9px;
}
.scrollbar .handle {
  height: 165px;
  margin: 0 1px;
  background: #cdcdcd;
}
.scroller .scrollbar button:last-child {
  margin-top: auto;
}
.apply {
  display: flex;
  justify-content: space-between;
  height: 29px;
  padding: 3px 3px 4px;
  border-bottom: 2px solid #cccccc;
}
.apply a {
  line-height: 18px;
  color: #0066cc;
  text-decoration: underline;
}
.apply button {
  width: 73px;
  height: 21px;
  border: 1px solid #bfbfbf;
  background: #cccccc;
  color: #838383;
}

/* project browser */
.browser {
  display: flex;
  flex: 1;
  flex-direction: column;
  min-height: 0;
}
.tree-wrap {
  display: flex;
  flex: 1;
  min-height: 0;
  overflow: hidden;
  background: #ffffff;
}
.tree {
  flex: 1;
  margin: 0;
  padding: 0;
  list-style: none;
  color: #000000;
}
.tree li {
  display: flex;
  align-items: center;
  height: 18px;
  margin-left: 9px;
  padding-left: 15px;
  border-left: 1px dotted #999999;
  background: linear-gradient(#999999 50%, transparent 50%) 19px 0 / 1px 2px repeat-y;
}
.tree .root {
  margin-left: 0;
  padding-left: 5px;
  border: 0;
  background: none;
}
.tree svg {
  width: 9px;
  height: 9px;
}
.tree svg.views {
  width: 14px;
  height: 14px;
  margin-right: 5px;
}
.dots {
  width: 10px;
  border-top: 1px dotted #999999;
}
.root .dots {
  width: 8px;
}
.tree span {
  padding: 0 2px 0 3px;
  background: #ffffff;
}
.tree .picked {
  height: 18px;
  background: #dddddd;
}
.tree .legend {
  align-items: flex-start;
}
.sheet {
  width: 14px;
  height: 14px;
  margin-left: -4px;
  background: #3c4350;
}
.tree-wrap .handle {
  flex: 1;
}

/* drawing area */
.viewer {
  display: flex;
  flex: 1;
  flex-direction: column;
  min-width: 0;
}
.view-tabs {
  display: flex;
  height: 20px;
  background: #cccccc;
}
.view-tab {
  display: flex;
  align-items: center;
  justify-content: flex-start;
  gap: 8px;
  width: 128px;
  padding-left: 5px;
  color: #444444;
}
.view-tab svg {
  width: 16px;
  height: 16px;
}
.view-tab:not(.current) svg {
  opacity: 0.5;
}
.view-tab.current {
  background: #ffffff;
  color: #1e1e1e;
  font-weight: bold;
}
.view-tab .close {
  margin: 0 5px 0 auto;
}
.view-tab .close svg {
  width: 10px;
  height: 10px;
}
.scene {
  flex: 1;
  width: 100%;
  min-height: 0;
  background: #ffffff;
}
```
